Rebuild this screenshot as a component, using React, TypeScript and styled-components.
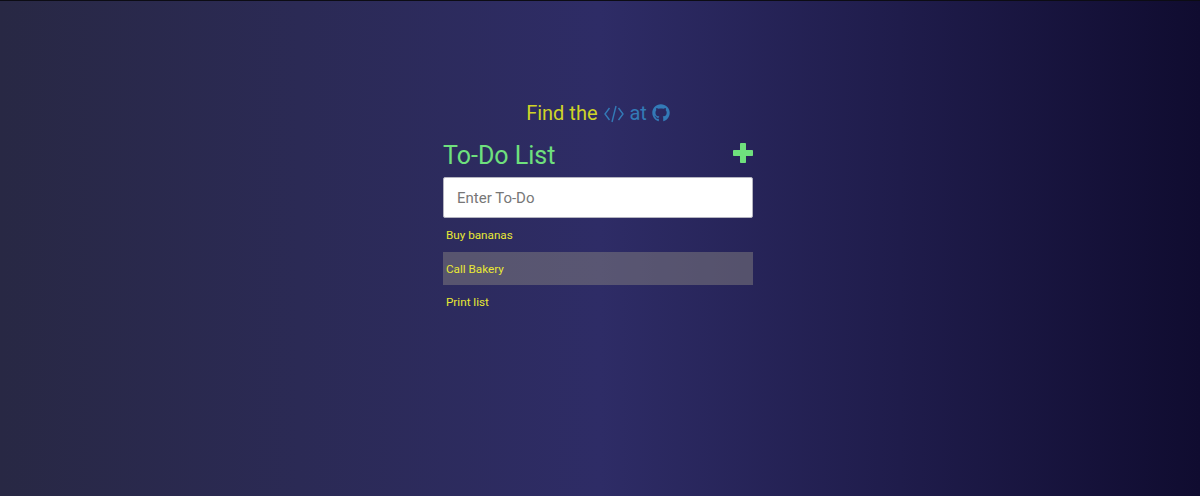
import styled, { createGlobalStyle } from "styled-components";
import { FaGithub } from "react-icons/fa";

const GlobalStyle = createGlobalStyle`
    html, body {
        margin: 0;
        padding: 0;
    }
    * {
        box-sizing: border-box;
    }
`;

const todos = [
    { text: "Buy bananas", active: false },
    { text: "Call Bakery", active: true },
    { text: "Print list", active: false },
];

const App = () => {
    return (
        <Page>
            <GlobalStyle />
            <Wrapper>
                <SourceLine>
                    Find the{" "}
                    <SourceLink>
                        <CodeIcon viewBox="0 0 20 18" fill="none" stroke="currentColor" strokeWidth="1.4">
                            <path d="M5.500 3 1 9l4.500 6" />
                            <path d="M12 1 8 17" />
                            <path d="M14.500 3 19 9l-4.500 6" />
                        </CodeIcon>{" "}
                        at <FaGithub size={18} style={{ verticalAlign: "-2px" }} />
                    </SourceLink>
                </SourceLine>
                <Header>
                    <Title>To-Do List</Title>
                    <AddButton>
                        <svg width="20" height="20" viewBox="0 0 20 20" fill="currentColor">
                            <rect x="7" y="0" width="6" height="20" rx="0.800" />
                            <rect x="0" y="7" width="20" height="6" rx="0.800" />
                        </svg>
                    </AddButton>
                </Header>
                <TodoInput placeholder="Enter To-Do" />
                <List>
                    {todos.map((todo) => (
                        <Item key={todo.text} $active={todo.active}>
                            {todo.text}
                        </Item>
                    ))}
                </List>
            </Wrapper>
        </Page>
    );
};

const Page = styled.div`
    width: 100%;
    height: 496px;
    overflow: hidden;
    border-top: 1px solid #0c0c14;
    background: linear-gradient(90deg, #282844 0%, #2e2c66 50%, #100c30 100%);
    font-family: Roboto, "Liberation Sans", sans-serif;
    display: flex;
    justify-content: center;
    padding-right: 4px;
`;

const Wrapper = styled.div`
    width: 310px;
    padding-top: 100px;
    display: flex;
    flex-direction: column;
`;

const SourceLine = styled.div`
    height: 24px;
    line-height: 24px;
    font-size: 20px;
    text-align: center;
    color: #cfd426;
    white-space: nowrap;
`;

const SourceLink = styled.span`
    color: #337ab7;
`;

const CodeIcon = styled.svg`
    width: 20px;
    height: 18px;
    margin-left: 2px;
    vertical-align: -3px;
`;

const Header = styled.div`
    height: 52px;
    display: flex;
    justify-content: space-between;
    align-items: flex-start;
    padding-top: 14px;
`;

const Title = styled.div`
    font-size: 25px;
    line-height: 32px;
    padding-top: 1px;
    color: #6fe07d;
`;

const AddButton = styled.div`
    color: #6fe07d;
    line-height: 0;
    padding-top: 4px;
`;

const TodoInput = styled.input`
    width: 100%;
    height: 41px;
    padding: 0 13px;
    border: 1px solid #b4b4c0;
    border-radius: 2px;
    background: #fff;
    font-family: inherit;
    font-size: 15px;
    color: #333;
    outline: none;
    &::placeholder {
        color: #777;
        opacity: 1;
    }
`;

const List = styled.div`
    display: flex;
    flex-direction: column;
`;

const Item = styled.div<{ $active: boolean }>`
    height: 33.500px;
    padding: 0.500px 0 0 3px;
    display: flex;
    align-items: center;
    font-size: 11.700px;
    color: #e8e834;
    background: ${({ $active }) => ($active ? "rgba(128, 124, 126, 0.52)" : "transparent")};
`;

export default App;
